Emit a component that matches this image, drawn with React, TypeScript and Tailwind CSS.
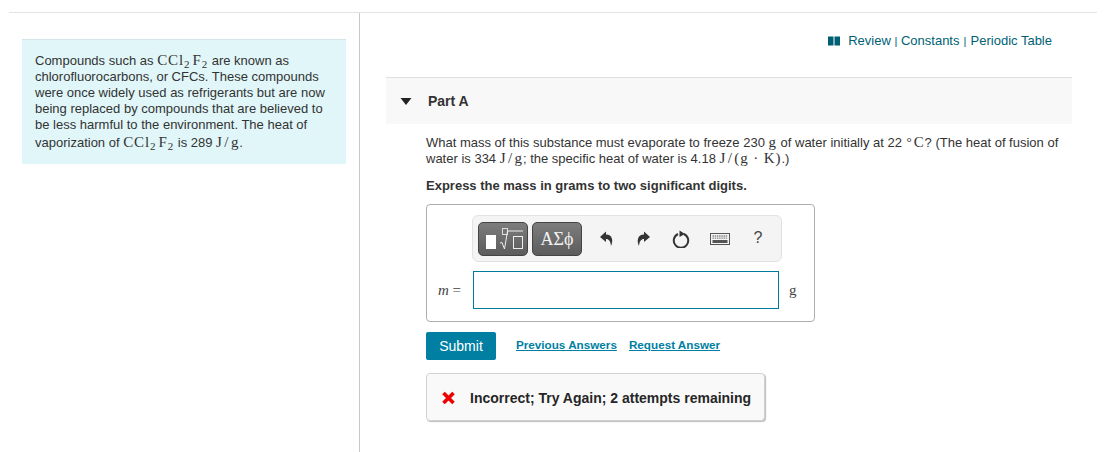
const sans = "font-['Liberation_Sans',Arial,sans-serif]";

function M({ children }: { children: React.ReactNode }) {
  return <span className="font-['Liberation_Serif',serif] text-[15px] tracking-[0.9px]">{children}</span>;
}

function Sub({ children }: { children: React.ReactNode }) {
  return <span className="relative top-[3px] text-[11px] leading-none">{children}</span>;
}

function Slash() {
  return <span className="mx-[1.500px]">/</span>;
}

function Ccl2f2() {
  return (
    <M>
      CCl<Sub>2</Sub>
      <span className="ml-[2px]">F</span>
      <Sub>2</Sub>
    </M>
  );
}

function ToolIcon({ children, w = 18 }: { children: React.ReactNode; w?: number }) {
  return (
    <svg width={w} height="18" viewBox={`0 0 ${w} 18`} className="block">
      {children}
    </svg>
  );
}

function Toolbar() {
  return (
    <div className="ml-[45px] flex h-[47px] w-[310px] items-center rounded-md border border-[#e2e2e2] bg-[#f4f4f4] pl-[5px]">
      {/* template button */}
      <div className="flex h-[34px] w-[50px] items-center justify-center rounded-[5px] border border-[#444] bg-gradient-to-b from-[#7d7d7d] to-[#5c5c5c]">
        <svg width="44" height="28" viewBox="0 0 44 28">
          <rect x="5" y="10" width="10" height="14" fill="#fff" />
          <rect x="21.500" y="3.500" width="5" height="6" fill="none" stroke="#ddd" />
          <path d="M19 18l2-.5 2.500 6.500 3-18h15.500" fill="none" stroke="#eee" />
          <rect x="32.500" y="11.500" width="9" height="12" fill="none" stroke="#eee" />
        </svg>
      </div>
      <div className="ml-[4px] flex h-[34px] w-[50px] items-center justify-center rounded-[5px] border border-[#444] bg-gradient-to-b from-[#7d7d7d] to-[#5c5c5c] font-['Liberation_Serif',serif] text-[18px] text-[#f2f2f2]">
        ΑΣϕ
      </div>
      <div className="ml-[15px] flex w-[170px] items-center justify-between">
        <ToolIcon>
          <path d="M9 1.500L3 7l6 5V9c3 0 4.500 2 5 7 2.500-5 1.500-11.500-5-11.500z" fill="#333" />
        </ToolIcon>
        <ToolIcon>
          <path d="M9 1.500L15 7l-6 5V9c-3 0-4.500 2-5 7-2.500-5-1.500-11.500 5-11.500z" fill="#333" />
        </ToolIcon>
        <ToolIcon>
          <path d="M12 4a7.200 7.200 0 1 1-6 0" fill="none" stroke="#333" strokeWidth="2" />
          <path d="M7.500 0.500l5.500 3.500-5.500 3z" fill="#333" />
        </ToolIcon>
        <ToolIcon w={20}>
          <rect x="0.500" y="3.500" width="19" height="11" fill="#f4f4f4" stroke="#555" />
          <path d="M2.500 6h15M2.500 8.200h15" stroke="#888" strokeWidth="1.300" strokeDasharray="1.500 .7" />
          <rect x="2.500" y="10" width="15" height="3" fill="#555" />
        </ToolIcon>
        <span className={`${sans} mb-[2px] w-[18px] text-center text-[16px] leading-none text-[#444]`}>?</span>
      </div>
    </div>
  );
}

export default function App() {
  return (
    <div className={`${sans} h-[452px] w-[1106px] overflow-hidden bg-white pl-[9px] pr-[9px] pt-3 text-[13px] leading-[16px] text-[#333]`}>
      <div className="flex h-[440px] border-t border-[#e3e3e3]">
        {/* left intro */}
        <div className="w-[351px] shrink-0 border-r border-[#c5c9d3] px-[13px] pt-[26px]">
          <div className="h-[125px] border-t border-[#d5e5e8] bg-[#e1f6f8] px-[13px] pt-[12px]">
            <p className="h-[17px]">Compounds such as <Ccl2f2 /> are known as</p>
            <p>chlorofluorocarbons, or CFCs. These compounds</p>
            <p>were once widely used as refrigerants but are now</p>
            <p>being replaced by compounds that are believed to</p>
            <p className="h-[17px]">be less harmful to the environment. The heat of</p>
            <p className="h-4">vaporization of <Ccl2f2 /> is 289 <M>J<Slash />g</M>.</p>
          </div>
        </div>

        {/* right part */}
        <div className="flex-1 pl-[26px] pr-[25px]">
          <div className="flex h-[64px] items-start justify-end pr-[20px] pt-[20px] text-[#005f75]">
            <svg width="12" height="10" viewBox="0 0 12 10" className="mr-[8px] mt-[3px]">
              <rect x="0" y="0.500" width="5.500" height="9" fill="#005f75" />
              <rect x="6.500" y="0.500" width="5.500" height="9" fill="#005f75" />
            </svg>
            <span>
              Review <span className="text-[11px]">|</span> Constants <span className="px-[0.500px] text-[11px]">|</span> Periodic Table
            </span>
          </div>

          <div className="flex h-[47px] items-center border-t border-[#dfdfdf] bg-[#f8f8f8]">
            <svg width="12" height="7" viewBox="0 0 12 7" className="ml-[14px]">
              <path d="M0.500 0h11L6 7z" fill="#222" />
            </svg>
            <span className="ml-[16px] text-[14px] font-bold text-[#333]">Part A</span>
          </div>

          <div className="pl-[40px]">
            <p className="mt-[10px] h-4 whitespace-nowrap">
              What mass of this substance must evaporate to freeze 230 <M>g</M> of water initially at 22 <M><span className="relative top-[-1px] ml-[1px] mr-[1px] text-[13px]">°</span>C</M>? (The heat of fusion of
            </p>
            <p className="h-4 whitespace-nowrap">
              water is 334 <M>J<Slash />g</M>; the specific heat of water is 4.18 <M>J<Slash />(g · K)</M>.)
            </p>
            <p className="mt-[12px] font-bold">Express the mass in grams to two significant digits.</p>

            <div className="mt-[10px] h-[118px] w-[389px] rounded border border-[#aeaeae] pt-[10px]">
              <Toolbar />
              <div className="mt-[9px] flex items-center">
                <span className="ml-[11px] w-[35px] font-['Liberation_Serif',serif] text-[15px] text-[#444]">
                  <i>m</i> =
                </span>
                <div className="h-[38px] w-[306px] border border-[#007a9c] bg-white" />
                <span className="ml-[10px] font-['Liberation_Serif',serif] text-[15px] text-[#444]">g</span>
              </div>
            </div>

            <div className="mt-[10px] flex h-[28px] items-start">
              <button className="h-[28px] w-[70px] rounded-[2px] bg-[#007fa3] text-[14px] text-white">Submit</button>
              <a className="ml-[20px] mt-[5px] text-[11.700px] font-bold text-[#007fa3] underline">Previous Answers</a>
              <a className="ml-[12px] mt-[5px] text-[11.700px] font-bold text-[#007fa3] underline">Request Answer</a>
            </div>

            <div className="mt-[13px] flex h-[48px] w-[339px] items-center rounded border border-[#d2d2d2] bg-[#f9f9f9] pt-[2px] shadow-[1px_1px_1px_#bbb]">
              <svg width="15" height="14" viewBox="0 0 15 14" className="ml-[14px]">
                <path d="M2.500 2l10 10M12.500 2l-10 10" stroke="#ee0000" strokeWidth="3.600" />
              </svg>
              <span className="ml-[14px] text-[14px] font-bold text-[#262626]">Incorrect; Try Again; 2 attempts remaining</span>
            </div>
          </div>
        </div>
      </div>
    </div>
  );
}
